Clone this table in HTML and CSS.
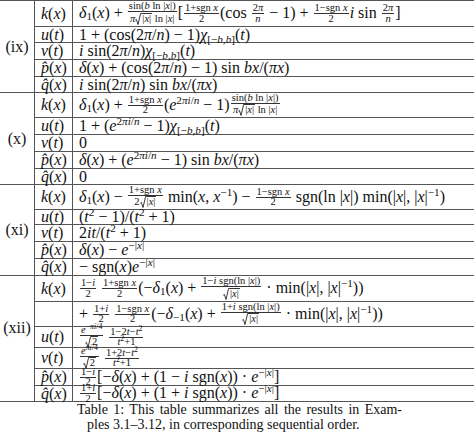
FILE: index.html
```html
<!DOCTYPE html>
<html>
<head>
<meta charset="utf-8">
<link rel="stylesheet" href="styles.css">
</head>
<body>
<div class="page">
<div class="results">
<!-- (ix) -->
<div class="label span5">(ix)</div>
<div class="fn"><span class="m"><i>k</i>(<i>x</i>)</span></div>
<div class="ex"><span class="m"><i>δ</i><sub>1</sub>(<i>x</i>) + <span class="fr"><span class="n">sin(<i>b</i> ln |<i>x</i>|)</span><span class="d"><i>π</i><span class="sq"><svg class="rad" viewBox="0 0 6 12" preserveAspectRatio="none"><path d="M0.3 7.2 L1.4 6.4 L3 11.5 L5.6 0.5 L6 0.5"/></svg><span class="rd">|<i>x</i>|</span></span> ln |<i>x</i>|</span></span>[<span class="fr"><span class="n">1+sgn <i>x</i></span><span class="d">2</span></span>(cos <span class="fr"><span class="n">2<i>π</i></span><span class="d"><i>n</i></span></span> − 1) + <span class="fr"><span class="n">1−sgn <i>x</i></span><span class="d">2</span></span><i>i</i> sin <span class="fr"><span class="n">2<i>π</i></span><span class="d"><i>n</i></span></span>]</span></div>
<div class="fn"><span class="m"><i>u</i>(<i>t</i>)</span></div>
<div class="ex"><span class="m">1 + (cos(2<i>π</i>/<i>n</i>) − 1)<i>χ</i><sub>[−<i>b</i>,<i>b</i>]</sub>(<i>t</i>)</span></div>
<div class="fn"><span class="m"><i>v</i>(<i>t</i>)</span></div>
<div class="ex"><span class="m"><i>i</i> sin(2<i>π</i>/<i>n</i>)<i>χ</i><sub>[−<i>b</i>,<i>b</i>]</sub>(<i>t</i>)</span></div>
<div class="fn"><span class="m"><i>p̂</i>(<i>x</i>)</span></div>
<div class="ex"><span class="m"><i>δ</i>(<i>x</i>) + (cos(2<i>π</i>/<i>n</i>) − 1) sin <i>bx</i>/(<i>πx</i>)</span></div>
<div class="fn"><span class="m"><i>q̂</i>(<i>x</i>)</span></div>
<div class="ex"><span class="m"><i>i</i> sin(2<i>π</i>/<i>n</i>) sin <i>bx</i>/(<i>πx</i>)</span></div>
<!-- (x) -->
<div class="label span5">(x)</div>
<div class="fn"><span class="m"><i>k</i>(<i>x</i>)</span></div>
<div class="ex"><span class="m"><i>δ</i><sub>1</sub>(<i>x</i>) + <span class="fr"><span class="n">1+sgn <i>x</i></span><span class="d">2</span></span>(<i>e</i><sup>2<i>πi</i>/<i>n</i></sup> − 1)<span class="fr"><span class="n">sin(<i>b</i> ln |<i>x</i>|)</span><span class="d"><i>π</i><span class="sq"><svg class="rad" viewBox="0 0 6 12" preserveAspectRatio="none"><path d="M0.3 7.2 L1.4 6.4 L3 11.5 L5.6 0.5 L6 0.5"/></svg><span class="rd">|<i>x</i>|</span></span> ln |<i>x</i>|</span></span></span></div>
<div class="fn"><span class="m"><i>u</i>(<i>t</i>)</span></div>
<div class="ex"><span class="m">1 + (<i>e</i><sup>2<i>πi</i>/<i>n</i></sup> − 1)<i>χ</i><sub>[−<i>b</i>,<i>b</i>]</sub>(<i>t</i>)</span></div>
<div class="fn"><span class="m"><i>v</i>(<i>t</i>)</span></div>
<div class="ex"><span class="m">0</span></div>
<div class="fn"><span class="m"><i>p̂</i>(<i>x</i>)</span></div>
<div class="ex"><span class="m"><i>δ</i>(<i>x</i>) + (<i>e</i><sup>2<i>πi</i>/<i>n</i></sup> − 1) sin <i>bx</i>/(<i>πx</i>)</span></div>
<div class="fn"><span class="m"><i>q̂</i>(<i>x</i>)</span></div>
<div class="ex"><span class="m">0</span></div>
<!-- (xi) -->
<div class="label span5">(xi)</div>
<div class="fn"><span class="m"><i>k</i>(<i>x</i>)</span></div>
<div class="ex"><span class="m"><i>δ</i><sub>1</sub>(<i>x</i>) − <span class="fr"><span class="n">1+sgn <i>x</i></span><span class="d">2<span class="sq"><svg class="rad" viewBox="0 0 6 12" preserveAspectRatio="none"><path d="M0.3 7.2 L1.4 6.4 L3 11.5 L5.6 0.5 L6 0.5"/></svg><span class="rd">|<i>x</i>|</span></span></span></span> min(<i>x</i>, <i>x</i><sup>−1</sup>) − <span class="fr"><span class="n">1−sgn <i>x</i></span><span class="d">2</span></span> sgn(ln |<i>x</i>|) min(|<i>x</i>|, |<i>x</i>|<sup>−1</sup>)</span></div>
<div class="fn"><span class="m"><i>u</i>(<i>t</i>)</span></div>
<div class="ex"><span class="m">(<i>t</i><sup>2</sup> − 1)/(<i>t</i><sup>2</sup> + 1)</span></div>
<div class="fn"><span class="m"><i>v</i>(<i>t</i>)</span></div>
<div class="ex"><span class="m">2<i>it</i>/(<i>t</i><sup>2</sup> + 1)</span></div>
<div class="fn"><span class="m"><i>p̂</i>(<i>x</i>)</span></div>
<div class="ex"><span class="m"><i>δ</i>(<i>x</i>) − <i>e</i><sup>−|<i>x</i>|</sup></span></div>
<div class="fn"><span class="m"><i>q̂</i>(<i>x</i>)</span></div>
<div class="ex"><span class="m">− sgn(<i>x</i>)<i>e</i><sup>−|<i>x</i>|</sup></span></div>
<!-- (xii) -->
<div class="label span6 label-up">(xii)</div>
<div class="fn"><span class="m"><i>k</i>(<i>x</i>)</span></div>
<div class="ex"><span class="m"><span class="fr"><span class="n">1−<i>i</i></span><span class="d">2</span></span> <span class="fr"><span class="n">1+sgn <i>x</i></span><span class="d">2</span></span>(−<i>δ</i><sub>1</sub>(<i>x</i>) + <span class="fr"><span class="n">1−<i>i</i> sgn(ln |<i>x</i>|)</span><span class="d"><span class="sq"><svg class="rad" viewBox="0 0 6 12" preserveAspectRatio="none"><path d="M0.3 7.2 L1.4 6.4 L3 11.5 L5.6 0.5 L6 0.5"/></svg><span class="rd">|<i>x</i>|</span></span></span></span> · min(|<i>x</i>|, |<i>x</i>|<sup>−1</sup>))</span></div>
<div class="fn"></div>
<div class="ex"><span class="m">+ <span class="fr"><span class="n">1+<i>i</i></span><span class="d">2</span></span> <span class="fr"><span class="n">1−sgn <i>x</i></span><span class="d">2</span></span>(−<i>δ</i><sub>−1</sub>(<i>x</i>) + <span class="fr"><span class="n">1+<i>i</i> sgn(ln |<i>x</i>|)</span><span class="d"><span class="sq"><svg class="rad" viewBox="0 0 6 12" preserveAspectRatio="none"><path d="M0.3 7.2 L1.4 6.4 L3 11.5 L5.6 0.5 L6 0.5"/></svg><span class="rd">|<i>x</i>|</span></span></span></span> · min(|<i>x</i>|, |<i>x</i>|<sup>−1</sup>))</span></div>
<div class="fn"><span class="m"><i>u</i>(<i>t</i>)</span></div>
<div class="ex"><span class="m"><span class="fr"><span class="n"><i>e</i><sup>−<i>πi</i>/4</sup></span><span class="d"><span class="sq"><svg class="rad" viewBox="0 0 6 12" preserveAspectRatio="none"><path d="M0.3 7.2 L1.4 6.4 L3 11.5 L5.6 0.5 L6 0.5"/></svg><span class="rd">2</span></span></span></span> <span class="fr"><span class="n">1−2<i>t</i>−<i>t</i><sup>2</sup></span><span class="d"><i>t</i><sup>2</sup>+1</span></span></span></div>
<div class="fn"><span class="m"><i>v</i>(<i>t</i>)</span></div>
<div class="ex"><span class="m"><span class="fr"><span class="n"><i>e</i><sup><i>πi</i>/4</sup></span><span class="d"><span class="sq"><svg class="rad" viewBox="0 0 6 12" preserveAspectRatio="none"><path d="M0.3 7.2 L1.4 6.4 L3 11.5 L5.6 0.5 L6 0.5"/></svg><span class="rd">2</span></span></span></span> <span class="fr"><span class="n">1+2<i>t</i>−<i>t</i><sup>2</sup></span><span class="d"><i>t</i><sup>2</sup>+1</span></span></span></div>
<div class="fn"><span class="m"><i>p̂</i>(<i>x</i>)</span></div>
<div class="ex"><span class="m"><span class="fr"><span class="n">1−<i>i</i></span><span class="d">2</span></span>[−<i>δ</i>(<i>x</i>) + (1 − <i>i</i> sgn(<i>x</i>)) · <i>e</i><sup>−|<i>x</i>|</sup>]</span></div>
<div class="fn"><span class="m"><i>q̂</i>(<i>x</i>)</span></div>
<div class="ex"><span class="m"><span class="fr"><span class="n">1+<i>i</i></span><span class="d">2</span></span>[−<i>δ</i>(<i>x</i>) + (1 + <i>i</i> sgn(<i>x</i>)) · <i>e</i><sup>−|<i>x</i>|</sup>]</span></div>
</div>
<div class="caption">
<div class="cap1">Table 1: This table summarizes all the results in Exam-</div>
<div class="cap2">ples 3.1–3.12, in corresponding sequential order.</div>
</div>
</div>
</body>
</html>
```

FILE: styles.css
```css
html, body {
  margin: 0;
  padding: 0;
  background: #fff;
}
body {
  font-family: "Liberation Serif", "Times New Roman", serif;
  font-size: 16px;
  color: #111;
}
.page {
  width: 474px;
  height: 433px;
  overflow: hidden;
}
.results {
  display: grid;
  grid-template-columns: 35px 38px 401px;
  grid-template-rows: 26px 16px 17px 17px 16px 25px 17px 17px 17px 16px 25px 15px 17px 17px 17px 26px 25px 21px 21px 17px 16px;
  border-top: 1px solid #555;
}
.label,
.fn,
.ex {
  box-sizing: border-box;
  border-bottom: 1px solid #555;
  display: flex;
  align-items: center;
  white-space: nowrap;
  line-height: 14px;
  min-width: 0;
}
.label {
  grid-column: 1;
  justify-content: center;
  border-right: 1px solid #555;
}
.span5 { grid-row: span 5; }
.span6 { grid-row: span 6; }
.label-up { padding-bottom: 22px; }
.fn {
  grid-column: 2;
  border-right: 1px solid #555;
  padding-left: 6px;
}
.ex {
  grid-column: 3;
  padding-left: 6px;
  overflow: visible;
}
.m {
  display: block;
}

.results sub,
.results sup {
  font-size: 0.7em;
  line-height: 0;
}
.results sub { vertical-align: -0.25em; }
.results sup { vertical-align: 0.5em; }
.fr sup { font-size: 0.75em; vertical-align: 0.45em; }

.fr {
  display: inline-block;
  vertical-align: -4px;
  text-align: center;
  font-size: 10.5px;
  line-height: 8.5px;
  margin: 0 1px;
}
.fr .n {
  display: block;
  border-bottom: 1px solid #333;
  padding: 0 1px 0.5px;
}
.fr .d {
  display: block;
  padding: 0.5px 1px 0;
}
.sq {
  display: inline-flex;
}
.sq .rad {
  width: 6px;
  flex: none;
  align-self: stretch;
  height: auto;
  fill: none;
  stroke: #222;
  stroke-width: 0.9;
}
.sq .rad path {
  vector-effect: non-scaling-stroke;
}
.sq .rd {
  align-self: baseline;
  border-top: 1px solid #333;
  padding: 1px 1px 0 1px;
}

.caption {
  font-size: 14px;
  line-height: 15px;
  white-space: nowrap;
}
.cap1 {
  margin-left: 77px;
  width: 325px;
  text-align: justify;
  text-align-last: justify;
}
.cap2 { padding-left: 87px; }
```
